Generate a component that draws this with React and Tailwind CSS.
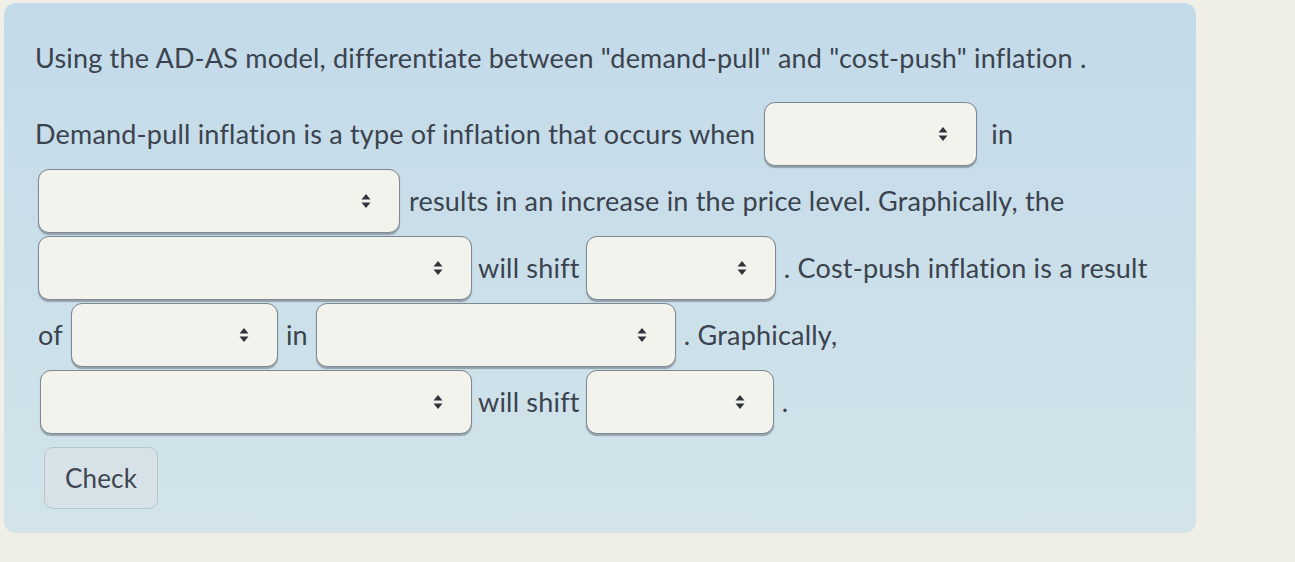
import { useState } from 'react'

function Arrows() {
    return (
        <svg width="10" height="16" viewBox="0 0 10 16" className="shrink-0">
            <path d="M5 1 L9.5 6.5 L0.5 6.5 Z" fill="#2f3338" />
            <path d="M5 15 L9.5 9.5 L0.5 9.5 Z" fill="#2f3338" />
        </svg>
    )
}

function Select({ width }) {
    const [value] = useState('')
    return (
        <div
            className="h-[64px] shrink-0 rounded-[11px] border-[1.5px] border-[#7f8790] bg-[#f3f3ee] shadow-[0_1.5px_1px_rgba(60,70,80,0.4)] flex items-center justify-end pr-[28px]"
            style={{ width }}
            data-value={value}
        >
            <Arrows />
        </div>
    )
}

export default function App() {
    return (
        <div className="w-[1295px] h-[562px] bg-[#efeee7] pt-[3px] pl-[4px] overflow-hidden font-['Lato',sans-serif] text-[#3a434e]">
            <div className="w-[1192px] h-[530px] rounded-[12px] bg-gradient-to-b from-[#c3dae9] to-[#d2e4ea] pl-[31px] pt-[35px] text-[27px] tracking-[0.2px]">
                <div className="h-[40px] flex items-center whitespace-nowrap">
                    Using the AD-AS model, differentiate between "demand-pull" and "cost-push" inflation .
                </div>

                <div className="mt-[24px] flex flex-col gap-[3px] whitespace-nowrap">
                    <div className="h-[64px] flex items-center gap-[9px]">
                        <span>Demand-pull inflation is a type of inflation that occurs when</span>
                        <Select width={213} />
                        <span className="ml-[5px]">in</span>
                    </div>
                    <div className="h-[64px] flex items-center gap-[9px] pl-[3px]">
                        <Select width={362} />
                        <span>results in an increase in the price level. Graphically, the</span>
                    </div>
                    <div className="h-[64px] flex items-center gap-[6px] pl-[3px]">
                        <Select width={434} />
                        <span>will shift</span>
                        <Select width={190} />
                        <span className="ml-[2px]">. Cost-push inflation is a result</span>
                    </div>
                    <div className="h-[64px] flex items-center gap-[8px] pl-[3px]">
                        <span>of</span>
                        <Select width={207} />
                        <span>in</span>
                        <Select width={360} />
                        <span>. Graphically,</span>
                    </div>
                    <div className="h-[64px] flex items-center gap-[6px] pl-[5px]">
                        <Select width={432} />
                        <span>will shift</span>
                        <Select width={188} />
                        <span className="ml-[2px]">.</span>
                    </div>
                </div>

                <button
                    type="button"
                    className="mt-[13px] ml-[9px] w-[114px] h-[62px] rounded-[9px] border border-[#b9c4cc] bg-[#d6e2e8] text-[26px] text-[#3f4650]"
                >
                    Check
                </button>
            </div>
        </div>
    )
}
